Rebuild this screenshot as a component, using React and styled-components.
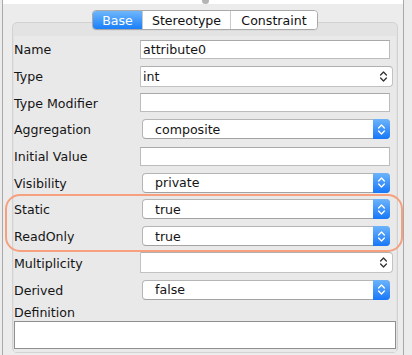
import React from 'react';
import styled, { createGlobalStyle } from 'styled-components';

const Global = createGlobalStyle`
  html, body { margin: 0; padding: 0; background: #ececec; }
  body {
    font-family: "DejaVu Sans", "Liberation Sans", sans-serif;
    font-size: 12.6px;
    color: #151515;
  }
  * { box-sizing: border-box; }
`;

const Frame = styled.div`
  position: relative;
  margin-left: 2px;
  width: 402px;
  height: 355px;
  border-left: 1px solid #a9a9a9;
  border-right: 1px solid #a9a9a9;
  display: flex;
  flex-direction: column;
`;

const TopStrip = styled.div`
  position: relative;
  height: 4px;
  background: #ffffff;
  flex: none;
`;

const Handle = styled.div`
  position: absolute;
  left: 199px;
  top: -3px;
  width: 7px;
  height: 7px;
  border-radius: 50%;
  background: #b4b4b4;
`;

const Body = styled.div`
  flex: 1;
  display: flex;
  flex-direction: column;
  padding: 0 5px 2px 9px;
  min-height: 0;
`;

const TabBar = styled.div`
  position: relative;
  z-index: 1;
  display: flex;
  justify-content: center;
  margin-top: 6px;
  flex: none;
`;

const TabGroup = styled.div`
  display: flex;
  height: 20px;
  border: 1px solid #a9a9a9;
  border-radius: 4px;
  background: #ffffff;
  overflow: hidden;
  box-shadow: 0 0.5px 0.5px rgba(0,0,0,0.08);
`;

const Tab = styled.div`
  width: ${p => p.$w}px;
  display: flex;
  align-items: center;
  justify-content: center;
  font-size: 12.6px;
  color: ${p => (p.$active ? '#ffffff' : '#111111')};
  background: ${p => (p.$active ? 'linear-gradient(#6fb6fb, #1a7ff9)' : '#ffffff')};
  & + & { border-left: 1px solid #c9c9c9; }
`;

const GroupBox = styled.div`
  flex: 1;
  margin-top: -8px;
  border: 1px solid #d2d2d2;
  border-radius: 5px;
  background: #e3e3e3;
  padding: 13px 1px 0 1px;
  display: flex;
  flex-direction: column;
  min-height: 0;
`;

const Panel = styled.div`
  flex: 1;
  background: #e9e9e9;
  display: flex;
  flex-direction: column;
  padding-bottom: 3px;
`;

const Row = styled.div`
  display: grid;
  grid-template-columns: 126px 1fr;
  align-items: center;
  height: 26.7px;
  padding-right: 6px;
`;

const Label = styled.div`
  white-space: nowrap;
  padding-top: 1px;
`;

const TextField = styled.div`
  height: 19px;
  background: #ffffff;
  border: 1px solid #bcbcbc;
  border-top-color: #a9a9a9;
  padding-left: 2px;
  display: flex;
  align-items: center;
`;

const Popup = styled.div`
  margin-left: 2px;
  height: 20px;
  background: #ffffff;
  border: 1px solid #b5b5b5;
  border-bottom-color: #a3a3a3;
  border-radius: 4px;
  display: flex;
  align-items: center;
`;

const PopupText = styled.div`
  flex: 1;
  padding-left: 12px;
`;

const BlueArrow = styled.div`
  align-self: stretch;
  width: 17px;
  margin: -1px -1px -1px 0;
  border-radius: 0 4px 4px 0;
  background: linear-gradient(#6cb4fb, #1777f9);
  display: flex;
  align-items: center;
  justify-content: center;
`;

const Combo = styled.div`
  margin-right: -3px;
  height: 21px;
  background: #ffffff;
  border: 1px solid #c2c2c2;
  border-top-color: #b0b0b0;
  border-radius: 0 4px 4px 0;
  display: flex;
  align-items: center;
`;

const ComboText = styled.div`
  flex: 1;
  padding-left: 2px;
`;

const ComboArrow = styled.div`
  align-self: stretch;
  width: 18px;
  display: flex;
  align-items: center;
  justify-content: center;
`;

const DefLabel = styled.div`
  height: 18px;
  padding-top: 2px;
  line-height: 16px;
`;

const TextArea = styled.div`
  height: 28px;
  background: #ffffff;
  border: 1px solid #8f8f8f;
`;

const Highlight = styled.div`
  position: absolute;
  left: 2px;
  top: 193.5px;
  width: 397.5px;
  height: 58.5px;
  border: 2.6px solid #f5a07f;
  border-radius: 15px;
  pointer-events: none;
`;

const Chevrons = ({ color }) => (
  <svg width="9" height="13" viewBox="0 0 9 13">
    <path
      d="M1.6 5 L4.5 2 L7.4 5 M1.6 8 L4.5 11 L7.4 8"
      fill="none"
      stroke={color}
      strokeWidth="1.3"
      strokeLinecap="round"
      strokeLinejoin="round"
    />
  </svg>
);

const rows = [
  { label: 'Name', kind: 'text', value: 'attribute0' },
  { label: 'Type', kind: 'combo', value: 'int' },
  { label: 'Type Modifier', kind: 'text', value: '' },
  { label: 'Aggregation', kind: 'popup', value: 'composite' },
  { label: 'Initial Value', kind: 'text', value: '' },
  { label: 'Visibility', kind: 'popup', value: 'private' },
  { label: 'Static', kind: 'popup', value: 'true' },
  { label: 'ReadOnly', kind: 'popup', value: 'true' },
  { label: 'Multiplicity', kind: 'combo', value: '' },
  { label: 'Derived', kind: 'popup', value: 'false' },
];

function Field({ kind, value }) {
  if (kind === 'text') return <TextField>{value}</TextField>;
  if (kind === 'combo')
    return (
      <Combo>
        <ComboText>{value}</ComboText>
        <ComboArrow>
          <Chevrons color="#333333" />
        </ComboArrow>
      </Combo>
    );
  return (
    <Popup>
      <PopupText>{value}</PopupText>
      <BlueArrow>
        <Chevrons color="#ffffff" />
      </BlueArrow>
    </Popup>
  );
}

export default function App() {
  return (
    <>
      <Global />
      <Frame>
        <TopStrip>
          <Handle />
        </TopStrip>
        <Body>
          <TabBar>
            <TabGroup>
              <Tab $w={49} $active>Base</Tab>
              <Tab $w={88}>Stereotype</Tab>
              <Tab $w={87}>Constraint</Tab>
            </TabGroup>
          </TabBar>
          <GroupBox>
            <Panel>
              {rows.map(r => (
                <Row key={r.label}>
                  <Label>{r.label}</Label>
                  <Field kind={r.kind} value={r.value} />
                </Row>
              ))}
              <DefLabel>Definition</DefLabel>
              <TextArea />
            </Panel>
          </GroupBox>
        </Body>
        <Highlight />
      </Frame>
    </>
  );
}
